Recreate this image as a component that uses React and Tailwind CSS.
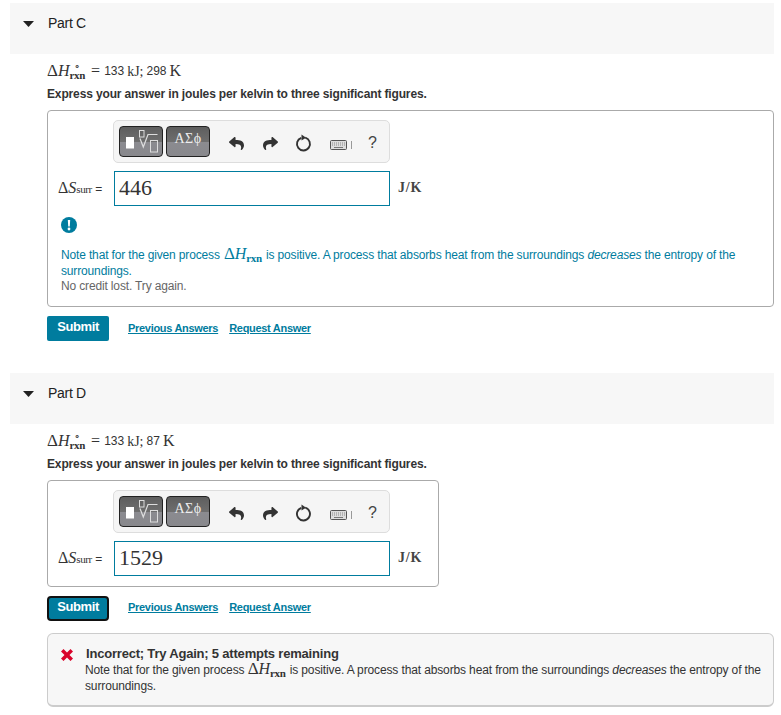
import { FaReply, FaShare } from "react-icons/fa";

const serif = "font-['Liberation_Serif',serif]";

//math bits
const DeltaH = ({ sub, deg, color }) => (
  <span className={`${serif} inline-flex items-baseline text-[16px] ${color || "text-[#333]"}`}>
    <span className="text-[17px]">Δ</span>
    <span className="italic">H</span>
    <span className="relative inline-block text-[11px] font-bold leading-none translate-y-[3px] tracking-[-0.3px]">
      {deg && <span className="absolute left-[4px] top-[-9px] text-[10px] font-normal">∘</span>}
      {sub}
    </span>
  </span>
);

const Caret = () => (
  <svg width="11" height="6" viewBox="0 0 11 6" className="shrink-0">
    <path d="M0 0h11L5.500 6z" fill="#222" />
  </svg>
);

const PartHeader = ({ title }) => (
  <div className="ml-[10px] mr-[7px] h-[51px] bg-[#f7f7f7] flex items-start pt-[12px] pl-[13px] gap-[14px]">
    <div className="pt-[6px]">
      <Caret />
    </div>
    <span className="text-[14px] leading-[16px] text-[#222] tracking-[-0.3px]">{title}</span>
  </div>
);

const GreyButton = ({ children }) => (
  <div className="w-[44px] h-[31px] rounded-[4px] border border-[#222] bg-[linear-gradient(#5e5e5e_0%,#6e6e6e_50%,#8b8b90_52%,#88888c_100%)] flex items-center justify-center">
    {children}
  </div>
);

const Keyboard = () => (
  <svg width="17" height="10" viewBox="0 0 17 10">
    <rect x="0.500" y="0.500" width="16" height="9" rx="1" fill="#ddd" stroke="#555" />
    <path d="M2 3h13M2 5h13" stroke="#888" strokeDasharray="1 1" />
    <path d="M4 7.500h9" stroke="#777" />
  </svg>
);

const Toolbar = () => (
  <div className="ml-[65px] w-[277px] h-[43px] rounded-[5px] border border-[#ddd] bg-[#f5f5f5] flex items-center pl-[5px]">
    <GreyButton>
      <svg width="34" height="24" viewBox="0 0 34 24">
        <rect x="2" y="7" width="8" height="11.500" fill="#fff" />
        <rect x="15.500" y="0.500" width="4.500" height="6.500" fill="none" stroke="#ddd" />
        <path d="M16 8.500l3.300 8.500 4.700-12.500h9.500" fill="none" stroke="#ddd" strokeWidth="1.200" />
        <rect x="26.500" y="10.500" width="7" height="11.500" fill="none" stroke="#ddd" />
      </svg>
    </GreyButton>
    <div className="ml-[3px]">
      <GreyButton>
        <span className={`${serif} text-[#eee] text-[14px] leading-none -translate-y-[3px] tracking-[0.4px]`}>ΑΣϕ</span>
      </GreyButton>
    </div>
    <div className="ml-[18px] w-[16px] flex justify-center translate-y-[2px]">
      <FaReply size={15} color="#333" />
    </div>
    <div className="ml-[18px] w-[16px] flex justify-center translate-y-[2px]">
      <FaShare size={15} color="#333" />
    </div>
    <svg width="17" height="18" viewBox="0 0 17 18" className="ml-[17px] translate-y-[1px]">
      <path d="M10.300 3.700a6.500 6.500 0 1 1-4 .1" fill="none" stroke="#333" strokeWidth="1.900" />
      <path d="M6.500 0.500l4.600 3.200-4.600 2.800z" fill="#333" />
    </svg>
    <div className="ml-[18px] translate-y-[3px] flex items-center">
      <Keyboard />
    </div>
    <div className="ml-[4px] w-px h-[8px] bg-[#999] translate-y-[3px]" />
    <span className="ml-[16px] text-[16px] leading-none text-[#444] translate-y-[1px]">?</span>
  </div>
);

const AnswerRow = ({ value }) => (
  <div className="flex items-center mt-[7px] h-[36px]">
    <div className={`${serif} w-[67px] pl-[10px] whitespace-nowrap text-[#333] text-[16px]`}>
      <span>Δ</span>
      <span className="italic">S</span>
      <span className="text-[11px] tracking-[-0.4px]">surr</span>
      <span className="font-['Liberation_Sans',sans-serif] text-[12px]"> =</span>
    </div>
    <div className="w-[276px] h-[35px] border border-[#007c9e] flex items-center pl-[4px] -ml-[1px] bg-white">
      <span className={`${serif} text-[22px] leading-none text-[#333]`}>{value}</span>
    </div>
    <span className={`${serif} ml-[8px] text-[14px] font-bold tracking-[0.8px] text-[#444] -translate-y-[1px]`}>J/K</span>
  </div>
);

const SubmitRow = ({ focused }) => (
  <div className="flex items-center h-[25px]">
    <button
      className={`w-[62px] h-[25px] rounded-[2px] bg-[#007c9e] text-white text-[13px] font-bold tracking-[-0.4px] ${
        focused ? "border-[2px] border-[#111] rounded-[4px] leading-[16px] pb-[4px]" : "pb-[3px]"
      }`}
    >
      Submit
    </button>
    <div className={`flex ${focused ? "-translate-y-[1px]" : ""}`}>
      <a className="ml-[19px] text-[11px] font-bold text-[#007c9e] underline tracking-[-0.3px]">Previous Answers</a>
      <a className="ml-[11px] text-[11px] font-bold text-[#007c9e] underline tracking-[-0.3px]">Request Answer</a>
    </div>
  </div>
);

const Given = ({ temp }) => (
  <div className="ml-[47px] h-[20px] flex items-center gap-[3px] text-[12px] text-[#333] whitespace-nowrap">
    <DeltaH sub="rxn" deg />
    <span className={`${serif} text-[16px] ml-[3px]`}>=</span>
    <span className="ml-[1px]">133</span>
    <span className={`${serif} text-[14px]`}>kJ;</span>
    <span>{temp}</span>
    <span className={`${serif} text-[16px]`}>K</span>
  </div>
);

const Express = () => (
  <p className="ml-[47px] mt-[6px] text-[12px] leading-[14px] font-bold text-[#333] whitespace-nowrap tracking-[-0.14px]">
    Express your answer in joules per kelvin to three significant figures.
  </p>
);

export default function App() {
  return (
    <div className="w-[781px] h-[715px] overflow-hidden bg-white pt-[3px] font-['Liberation_Sans',sans-serif]">
      {/* Part C */}
      <PartHeader title="Part C" />
      <div className="mt-[7px]">
        <Given temp="298" />
      </div>
      <Express />
      <div className="ml-[47px] mr-[7px] mt-[9px] h-[197px] border border-[#aaa] rounded-[4px] pt-[9px]">
        <Toolbar />
        <AnswerRow value="446" />
        <svg width="16" height="16" viewBox="0 0 16 16" className="ml-[13px] mt-[11px]">
          <circle cx="8" cy="8" r="8" fill="#007c9e" />
          <path d="M6.800 3h2.400l-.4 6.500H7.200z" fill="#fff" />
          <circle cx="8" cy="12" r="1.400" fill="#fff" />
        </svg>
        <div className="ml-[13px] mt-[13px] w-[700px] text-[12px] leading-[16px] text-[#007c9e] tracking-[-0.15px]">
          Note that for the given process{" "}
          <span className="mx-[1px]">
            <DeltaH sub="rxn" color="text-[#007c9e]" />
          </span>{" "}
          is positive. A process that absorbs heat from the surroundings <i>decreases</i> the entropy of the surroundings.
        </div>
        <p className="ml-[13px] text-[12px] leading-[14px] text-[#666] tracking-[-0.15px]">No credit lost. Try again.</p>
      </div>
      <div className="ml-[47px] mt-[9px]">
        <SubmitRow />
      </div>

      {/* Part D */}
      <div className="mt-[32px]">
        <PartHeader title="Part D" />
      </div>
      <div className="mt-[7px]">
        <Given temp="87" />
      </div>
      <Express />
      <div className="ml-[47px] mt-[9px] w-[392px] h-[107px] border border-[#aaa] rounded-[4px] pt-[9px]">
        <Toolbar />
        <AnswerRow value="1529" />
      </div>
      <div className="ml-[47px] mt-[9px]">
        <SubmitRow focused />
      </div>

      {/* feedback */}
      <div className="ml-[47px] mr-[7px] mt-[12px] h-[74px] rounded-[6px] border border-[#ccc] border-b-2 bg-[#f7f7f7] flex pt-[12px] pl-[12px]">
        <svg width="14" height="14" viewBox="0 0 14 14" className="shrink-0 mt-[2px]">
          <path d="M1 3.500L3.500 1 7 4.500 10.500 1 13 3.500 9.500 7 13 10.500 10.500 13 7 9.500 3.500 13 1 10.500 4.500 7z" fill="#d9042b" />
        </svg>
        <div className="ml-[11px] w-[680px] text-[#333]">
          <p className="ml-[1px] text-[13px] leading-[15px] font-bold tracking-[-0.2px]">Incorrect; Try Again; 5 attempts remaining</p>
          <p className="text-[12px] leading-[16px] tracking-[-0.13px]">
            Note that for the given process{" "}
            <span className="mr-[1px]">
              <DeltaH sub="rxn" />
            </span>{" "}
            is positive. A process that absorbs heat from the surroundings <i>decreases</i> the entropy of the surroundings.
          </p>
        </div>
      </div>
    </div>
  );
}
